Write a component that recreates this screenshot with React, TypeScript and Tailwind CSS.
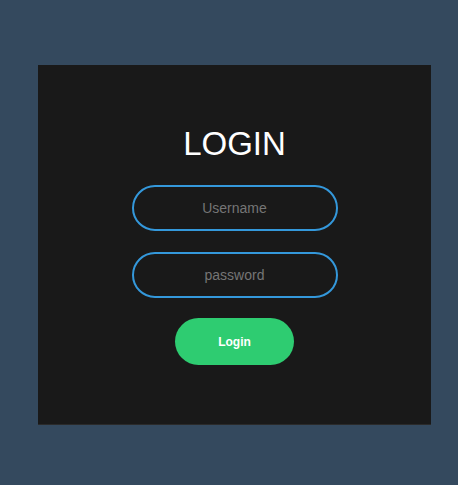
export default function App() {
  return (
    <div className="min-h-[485px] w-full bg-[#34495e] pt-[65px] pl-[38px] font-['Liberation_Sans',Arial,sans-serif]">
      {/* Card */}
      <div className="w-[393px] h-[360px] bg-[#191919] flex flex-col items-center pt-[60px] border-b border-[#2a2a2a]">
        <h1 className="text-[33px] leading-[37px] text-white font-normal">LOGIN</h1>

        <input
          type="text"
          placeholder="Username"
          className="mt-[23px] w-[206px] h-[46px] rounded-full border-2 border-[#3498db] bg-transparent text-center text-[14px] text-white outline-none placeholder:text-[#757575]"
        />
        <input
          type="password"
          placeholder="password"
          className="mt-[21px] w-[206px] h-[46px] rounded-full border-2 border-[#3498db] bg-transparent text-center text-[14px] text-white outline-none placeholder:text-[#757575]"
        />

        <button className="mt-[20px] w-[119px] h-[47px] rounded-full bg-[#2ecc71] text-white text-[12px] font-bold">
          Login
        </button>
      </div>
    </div>
  );
}
